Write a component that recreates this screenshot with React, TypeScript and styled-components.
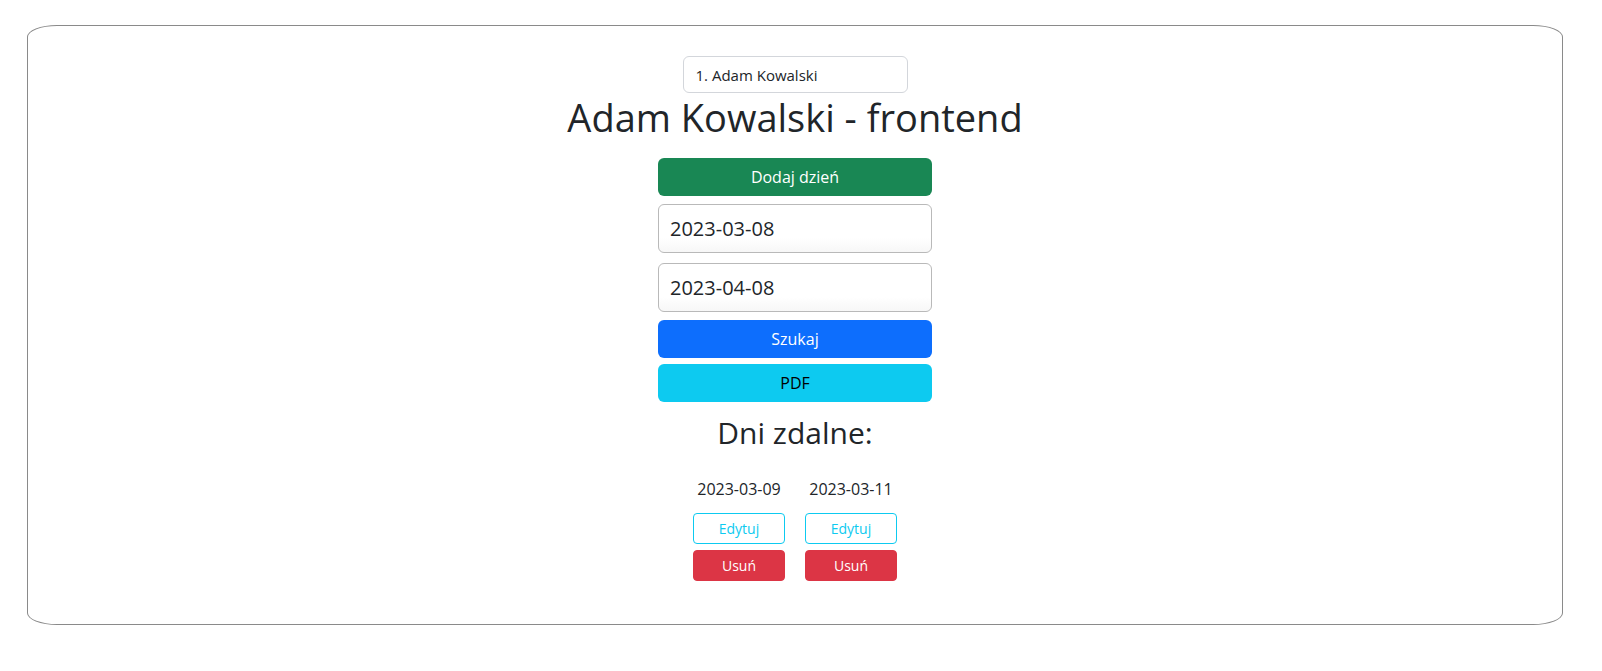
import styled, { createGlobalStyle } from "styled-components";

const GlobalStyle = createGlobalStyle`
	body {
		margin: 0;
		padding: 0;
		background: #fff;
		color: #212529;
		font-family: "Segoe UI", "Open Sans", "Noto Sans", sans-serif;
		font-size: 16px;
	}
	* {
		box-sizing: border-box;
	}
`;

const Panel = styled.div`
	margin: 25px 0 0 27px;
	width: 1536px;
	height: 600px;
	border: 1px solid #8a8a8a;
	border-radius: 30px / 12px;
	padding-top: 30px;
	display: flex;
	flex-direction: column;
	align-items: center;
`;

const Select = styled.select`
	width: 225px;
	height: 37px;
	padding: 0 12px;
	font: inherit;
	font-size: 15px;
	color: #212529;
	background: #fff;
	border: 1px solid #d3d6db;
	border-radius: 6px;
	appearance: none;
	outline: none;
`;

const Title = styled.h1`
	margin: 0 0 17px;
	font-size: 38px;
	font-weight: 400;
	line-height: 48px;
`;

const Form = styled.div`
	width: 274px;
	display: flex;
	flex-direction: column;
`;

const Button = styled.button<{ $bg: string; $fg: string; $gap: number }>`
	height: 38px;
	margin-bottom: ${(p) => p.$gap}px;
	border: none;
	border-radius: 6px;
	background: ${(p) => p.$bg};
	color: ${(p) => p.$fg};
	font: inherit;
	font-size: 16px;
	cursor: pointer;
`;

const DateInput = styled.input<{ $gap: number }>`
	height: 49px;
	margin-bottom: ${(p) => p.$gap}px;
	padding: 0 11px;
	border: 1px solid #b9b9b9;
	border-radius: 6px;
	background: linear-gradient(#fff 70%, #f7f7f7);
	font: inherit;
	font-size: 20px;
	color: #212529;
	outline: none;
`;

const Subtitle = styled.h2`
	margin: 12px 0 25px;
	font-size: 30px;
	font-weight: 400;
	line-height: 38px;
`;

const Days = styled.div`
	display: flex;
	gap: 20px;
`;

const Day = styled.div`
	width: 92px;
	display: flex;
	flex-direction: column;
	align-items: center;
`;

const DayDate = styled.span`
	font-size: 16px;
	line-height: 24px;
	margin-bottom: 12px;
`;

const SmallButton = styled.button<{ $variant: "outline" | "danger" }>`
	width: 92px;
	height: 31px;
	margin-bottom: 6px;
	border-radius: 4px;
	border: 1px solid ${(p) => (p.$variant === "outline" ? "#0dcaf0" : "#dc3545")};
	background: ${(p) => (p.$variant === "outline" ? "#fff" : "#dc3545")};
	color: ${(p) => (p.$variant === "outline" ? "#0dcaf0" : "#fff")};
	font: inherit;
	font-size: 14px;
	cursor: pointer;
`;

const days = ["2023-03-09", "2023-03-11"];

export default function App() {
	return (
		<>
			<GlobalStyle />
			<Panel>
				<Select defaultValue="1">
					<option value="1">1. Adam Kowalski</option>
				</Select>
				<Title>Adam Kowalski - frontend</Title>
				<Form>
					<Button $bg="#198754" $fg="#fff" $gap={8}>
						Dodaj dzień
					</Button>
					<DateInput $gap={10} defaultValue="2023-03-08" />
					<DateInput $gap={8} defaultValue="2023-04-08" />
					<Button $bg="#0d6efd" $fg="#fff" $gap={6}>
						Szukaj
					</Button>
					<Button $bg="#0dcaf0" $fg="#000" $gap={0}>
						PDF
					</Button>
				</Form>
				<Subtitle>Dni zdalne:</Subtitle>
				<Days>
					{days.map((d) => (
						<Day key={d}>
							<DayDate>{d}</DayDate>
							<SmallButton $variant="outline">Edytuj</SmallButton>
							<SmallButton $variant="danger">Usuń</SmallButton>
						</Day>
					))}
				</Days>
			</Panel>
		</>
	);
}
